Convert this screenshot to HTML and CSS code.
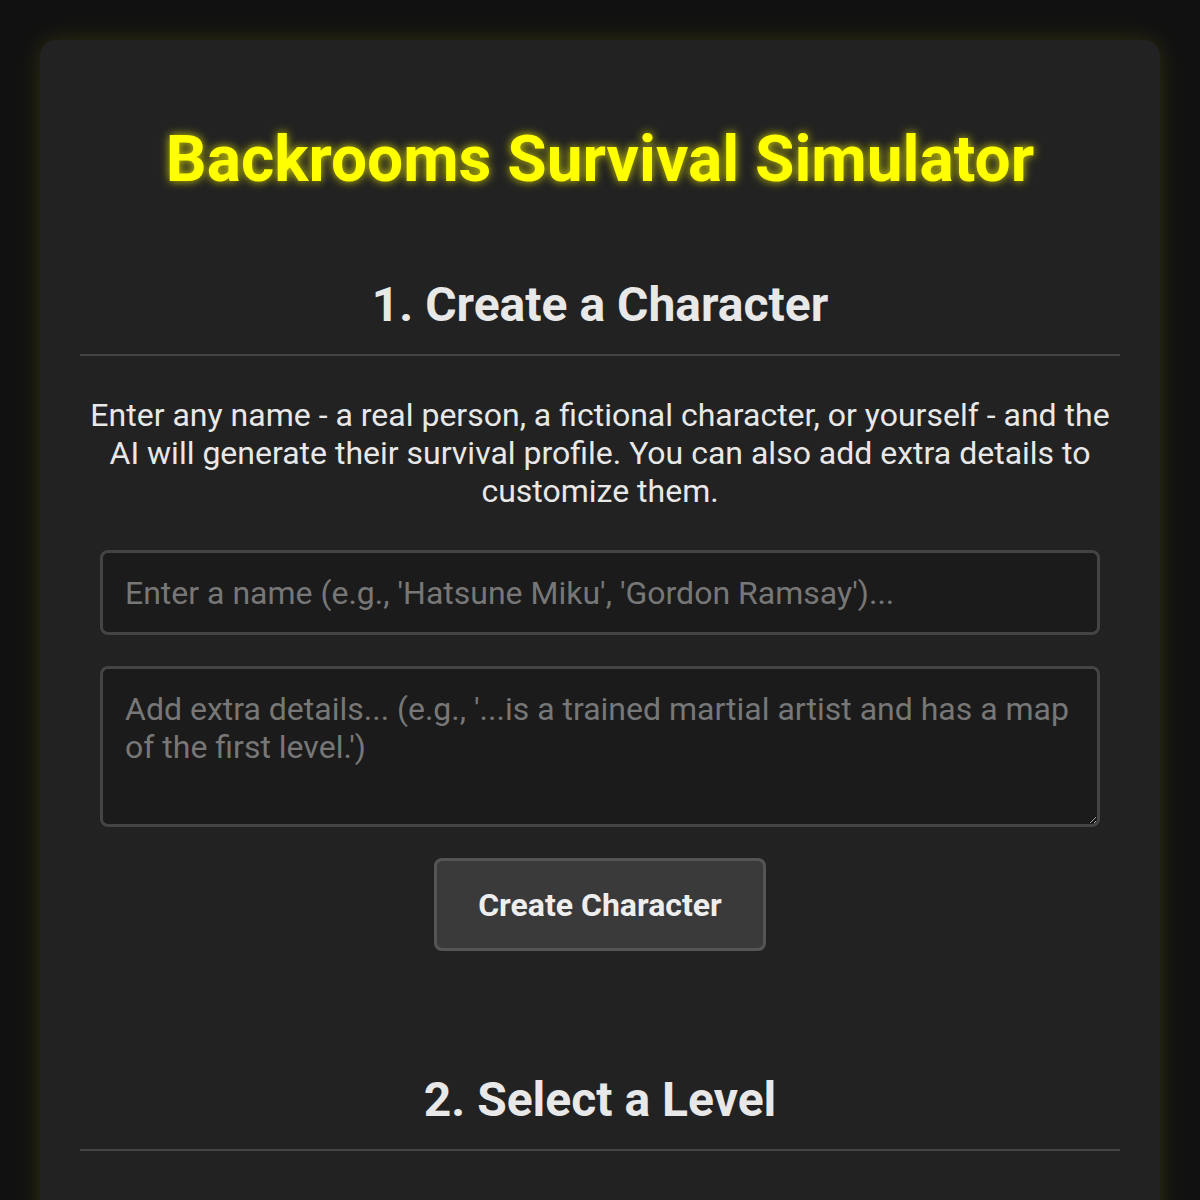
FILE: index.html
```html
<!DOCTYPE html>
<html lang="en">
<head>
  <meta charset="UTF-8">
  <title>Backrooms Survival Simulator</title>
  <meta name="viewport" content="width=device-width, initial-scale=1.0">
  <link rel="stylesheet" href="styles.css">
</head>
<body>
  <div class="container">
    <h1>Backrooms Survival Simulator</h1>

    <section class="step">
      <h2>1. Create a Character</h2>
      <p>Enter any name - a real person, a fictional character, or yourself - and the AI will generate their survival profile. You can also add extra details to customize them.</p>
      <input type="text" id="charName" placeholder="Enter a name (e.g., 'Hatsune Miku', 'Gordon Ramsay')..." />
      <textarea id="charDetails" rows="3" placeholder="Add extra details... (e.g., '...is a trained martial artist and has a map of the first level.')"></textarea>
      <button>Create Character</button>
    </section>

    <section class="step">
      <h2>2. Select a Level</h2>
    </section>
  </div>
</body>
</html>
```

FILE: styles.css
```css
body {
  font-family: Roboto, 'Noto Sans', sans-serif;
  margin: 0;
  padding: 40px;
  background: #111111;
  color: #e8e8e8;
}
.container {
  max-width: 1040px;
  margin: auto;
  background: #222222;
  padding: 40px;
  border-radius: 16px;
  box-shadow: 0 0 25px rgba(255, 255, 0, 0.12);
  text-align: center;
}
h1 {
  color: #ffff00;
  font-size: 64px;
  line-height: 76px;
  margin: 42px 0 78px;
  text-shadow: 0 0 10px rgba(255, 255, 0, 0.8);
}
h2 {
  font-size: 48px;
  line-height: 58px;
  margin: 0;
  padding-bottom: 20px;
  border-bottom: 2px solid #444;
}
.step {
  margin-bottom: 120px;
}
p {
  font-size: 32px;
  line-height: 38px;
  margin: 40px 0 40px;
}
input, textarea {
  display: block;
  box-sizing: border-box;
  width: 1000px;
  margin: 0 auto 31px;
  padding: 21px 22px;
  background: #1b1b1b;
  border: 3px solid #444;
  border-radius: 8px;
  color: #e8e8e8;
  font-family: Roboto, sans-serif;
  font-size: 32px;
}
input {
  height: 85px;
  padding-top: 0;
  padding-bottom: 0;
}
textarea {
  height: 161px;
  line-height: 38px;
  resize: vertical;
}
input::placeholder, textarea::placeholder {
  color: #777;
}
button {
  display: block;
  margin: 0 auto;
  width: 332px;
  height: 93px;
  background: #3a3a3a;
  border: 3px solid #555;
  border-radius: 8px;
  color: #eeeeee;
  font-family: Roboto, sans-serif;
  font-size: 32px;
  font-weight: bold;
  cursor: pointer;
}
```
